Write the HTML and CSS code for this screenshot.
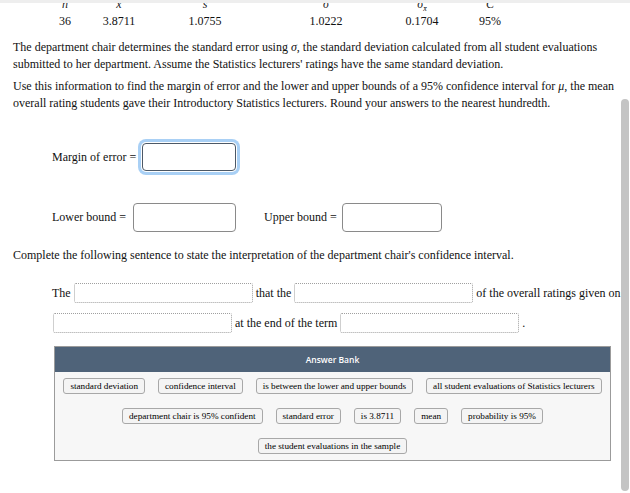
FILE: index.html
```html
<!DOCTYPE html>
<html>
<head>
<meta charset="utf-8">
<link rel="stylesheet" href="styles.css">
</head>
<body>
<div class="page">
  <div class="topband"></div>
  <div class="stats">
    <div class="row head">
      <span><i>n</i></span><span><i>x̄</i></span><span><i>s</i></span><span><i>σ</i></span><span><i>σ<sub>x̄</sub></i></span><span><i>C</i></span>
    </div>
    <div class="row vals">
      <span>36</span><span>3.8711</span><span>1.0755</span><span>1.0222</span><span>0.1704</span><span>95%</span>
    </div>
  </div>

  <p class="para">The department chair determines the standard error using <i>σ</i>, the standard deviation calculated from all student evaluations submitted to her department. Assume the Statistics lecturers' ratings have the same standard deviation.</p>
  <p class="para">Use this information to find the margin of error and the lower and upper bounds of a 95% confidence interval for <i>μ</i>, the mean overall rating students gave their Introductory Statistics lecturers. Round your answers to the nearest hundredth.</p>

  <div class="field-row moe">
    <span class="lbl">Margin of error =</span><span class="inp focus"></span>
  </div>

  <div class="field-row bounds">
    <span class="lbl">Lower bound =</span><span class="inp wide"></span>
    <span class="lbl upper">Upper bound =</span><span class="inp wide2"></span>
  </div>

  <p class="para complete">Complete the following sentence to state the interpretation of the department chair's confidence interval.</p>

  <div class="sentence s1">
    <span class="w">The</span><span class="drop"></span><span class="w">that the</span><span class="drop"></span><span class="w">of the overall ratings given on</span>
  </div>
  <div class="sentence s2">
    <span class="drop"></span><span class="w">at the end of the term</span><span class="drop"></span><span class="w">.</span>
  </div>

  <div class="bank">
    <div class="bank-head">Answer Bank</div>
    <div class="bank-body">
      <div class="bank-row">
        <span class="chip">standard deviation</span>
        <span class="chip">confidence interval</span>
        <span class="chip">is between the lower and upper bounds</span>
        <span class="chip">all student evaluations of Statistics lecturers</span>
      </div>
      <div class="bank-row">
        <span class="chip">department chair is 95% confident</span>
        <span class="chip">standard error</span>
        <span class="chip">is 3.8711</span>
        <span class="chip">mean</span>
        <span class="chip">probability is 95%</span>
      </div>
      <div class="bank-row">
        <span class="chip">the student evaluations in the sample</span>
      </div>
    </div>
  </div>

  <div class="scrollbar"></div>
</div>
</body>
</html>
```

FILE: styles.css
```css
html, body {
  margin: 0;
  padding: 0;
  background: #fff;
}
body {
  font-family: "Liberation Serif", "Times New Roman", serif;
  font-size: 12px;
  color: #111;
  overflow: hidden;
}
.page {
  position: relative;
  width: 630px;
  height: 493px;
  overflow: hidden;
}
.topband {
  height: 3px;
  background: #eeeeee;
  margin-bottom: -3px;
  position: relative;
  z-index: 1;
}
.stats {
  margin-top: -7px;
  padding-left: 45px;
}
.row {
  display: grid;
  grid-template-columns: 40px 68px 104px 138px 54px 82px;
  text-align: center;
}
.head {
  height: 16px;
  line-height: 16px;
  font-size: 12px;
  color: #222;
}
.head sub {
  font-size: 8px;
}
.vals {
  height: 18px;
  line-height: 18px;
}
.para {
  margin: 9px 0 0 0;
  padding: 0 8px 0 13px;
  line-height: 17px;
}
.para + .para {
  margin-top: 5px;
}
.field-row {
  display: flex;
  align-items: center;
  padding-left: 52px;
}
.moe {
  margin-top: 31px;
}
.bounds {
  margin-top: 32px;
}
.inp {
  display: inline-block;
  box-sizing: border-box;
  border: 1px solid #8a8a8a;
  border-radius: 4px;
  background: #fff;
}
.focus {
  width: 94px;
  height: 28px;
  margin-left: 6px;
  border-color: #4c5866;
  box-shadow: 0 0 0 1px #fff, 0 0 0 4px #a9d0f5;
}
.wide {
  width: 103px;
  height: 29px;
  margin-left: 7px;
}
.wide2 {
  width: 100px;
  height: 29px;
  margin-left: 5px;
}
.upper {
  margin-left: 28px;
}
.complete {
  margin-top: 15px;
}
.sentence {
  display: flex;
  align-items: center;
  white-space: nowrap;
}
.s1 {
  margin-top: 19px;
  padding-left: 52px;
}
.s2 {
  margin-top: 10px;
  padding-left: 53px;
}
.drop {
  display: inline-block;
  box-sizing: border-box;
  width: 179px;
  height: 20px;
  border: 1px dotted #a0a0a0;
  border-radius: 2px;
  background: #fff;
}
.w {
  padding: 0 3px;
}
.s1 .w:first-child {
  padding-left: 0;
}
.bank {
  margin: 13px 0 0 54px;
  width: 557px;
  box-sizing: border-box;
  border: 1px solid #9b9b9b;
  background: #f7f7f7;
}
.bank-head {
  height: 25px;
  line-height: 25px;
  background: #4f6379;
  color: #fff;
  text-align: center;
  font-family: "Open Sans", "Liberation Sans", sans-serif;
  font-size: 8.5px;
  font-weight: 600;
}
.bank-body {
  padding: 6px 0 6px;
  display: flex;
  flex-direction: column;
  gap: 14px;
}
.bank-row {
  display: flex;
  justify-content: center;
  gap: 13px;
}
.chip {
  display: inline-block;
  box-sizing: border-box;
  height: 16px;
  line-height: 14px;
  padding: 0 6px;
  font-size: 9.2px;
  border: 1px solid #a8a8a8;
  border-radius: 3px;
  background: #f4f4f4;
  color: #000;
  white-space: nowrap;
}
.scrollbar {
  position: absolute;
  right: 1px;
  top: 99px;
  width: 8px;
  height: 392px;
  border-radius: 4px;
  background: #c4c4c4;
}
```
